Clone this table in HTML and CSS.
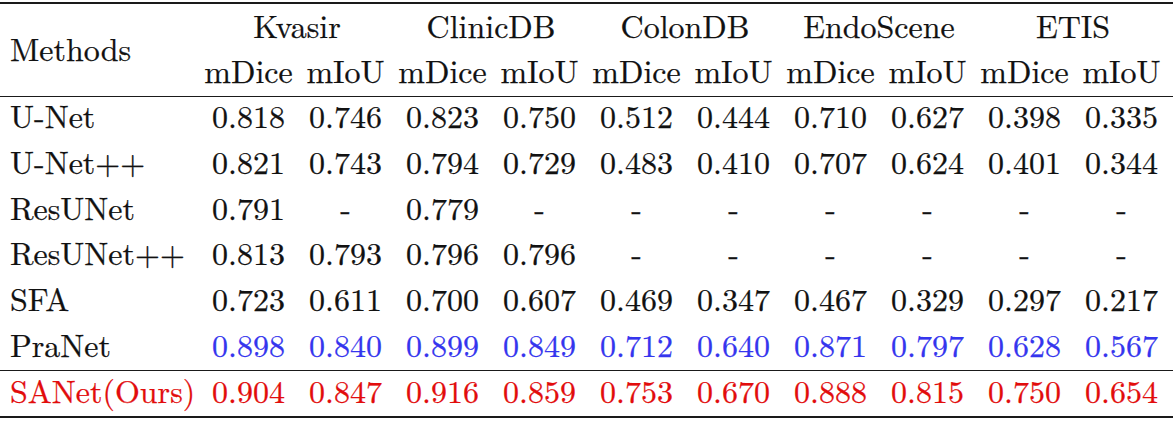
FILE: index.html
```html
<!DOCTYPE html>
<html>
<head>
<meta charset="utf-8">
<link rel="stylesheet" href="styles.css">
</head>
<body>
<div class="table">
  <div class="rule thick"></div>
  <div class="grid head">
    <div class="method span2">Methods</div>
    <div class="group">Kvasir</div>
    <div class="group">ClinicDB</div>
    <div class="group">ColonDB</div>
    <div class="group">EndoScene</div>
    <div class="group">ETIS</div>
    <div class="sub">mDice</div><div class="sub">mIoU</div>
    <div class="sub">mDice</div><div class="sub">mIoU</div>
    <div class="sub">mDice</div><div class="sub">mIoU</div>
    <div class="sub">mDice</div><div class="sub">mIoU</div>
    <div class="sub">mDice</div><div class="sub">mIoU</div>
  </div>
  <div class="rule thin"></div>
  <div class="grid body">
    <div class="method">U-Net</div>
    <div>0.818</div><div>0.746</div><div>0.823</div><div>0.750</div><div>0.512</div><div>0.444</div><div>0.710</div><div>0.627</div><div>0.398</div><div>0.335</div>

    <div class="method">U-Net++</div>
    <div>0.821</div><div>0.743</div><div>0.794</div><div>0.729</div><div>0.483</div><div>0.410</div><div>0.707</div><div>0.624</div><div>0.401</div><div>0.344</div>

    <div class="method">ResUNet</div>
    <div>0.791</div><div>-</div><div>0.779</div><div>-</div><div>-</div><div>-</div><div>-</div><div>-</div><div>-</div><div>-</div>

    <div class="method">ResUNet++</div>
    <div>0.813</div><div>0.793</div><div>0.796</div><div>0.796</div><div>-</div><div>-</div><div>-</div><div>-</div><div>-</div><div>-</div>

    <div class="method">SFA</div>
    <div>0.723</div><div>0.611</div><div>0.700</div><div>0.607</div><div>0.469</div><div>0.347</div><div>0.467</div><div>0.329</div><div>0.297</div><div>0.217</div>

    <div class="method">PraNet</div>
    <div class="blue">0.898</div><div class="blue">0.840</div><div class="blue">0.899</div><div class="blue">0.849</div><div class="blue">0.712</div><div class="blue">0.640</div><div class="blue">0.871</div><div class="blue">0.797</div><div class="blue">0.628</div><div class="blue">0.567</div>
  </div>
  <div class="rule thin"></div>
  <div class="grid ours">
    <div class="method">SANet(Ours)</div>
    <div>0.904</div><div>0.847</div><div>0.916</div><div>0.859</div><div>0.753</div><div>0.670</div><div>0.888</div><div>0.815</div><div>0.750</div><div>0.654</div>
  </div>
  <div class="rule thick"></div>
</div>
</body>
</html>
```

FILE: styles.css
```css
html, body {
  margin: 0;
  padding: 0;
  background: #ffffff;
}

body {
  font-family: "Latin Modern Roman", "CMU Serif", "Liberation Serif", serif;
  font-size: 32px;
  color: #111111;
  -webkit-text-stroke: 0.25px currentColor;
}

.table {
  width: 1176px;
  padding-top: 2px;
}

.rule {
  width: 1173px;
  background: #1a1a1a;
}

.rule.thick {
  height: 2px;
}

.rule.thin {
  height: 1px;
}

.grid {
  display: grid;
  grid-template-columns: 200px repeat(10, 97px);
  text-align: center;
  white-space: nowrap;
}

.method {
  text-align: left;
  padding-left: 10px;
}

.head {
  grid-template-rows: 45px 45px;
  line-height: 41px;
  padding-bottom: 2px;
}

.head .span2 {
  grid-row: 1 / span 2;
  align-self: center;
  padding-bottom: 4px;
}

.group {
  grid-column: span 2;
}

.body {
  height: 273px;
  grid-auto-rows: 45.8px;
  line-height: 36px;
}

.blue {
  color: #3535ee;
}

.ours {
  height: 45px;
  line-height: 38px;
  color: #e20c0c;
}
```
